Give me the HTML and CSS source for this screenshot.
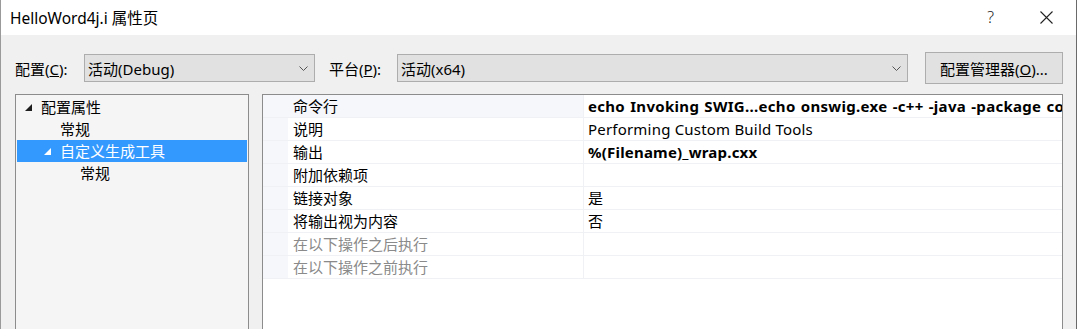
FILE: index.html
```html
<!DOCTYPE html>
<html lang="zh-CN">

<head>
	<meta charset="UTF-8">
	<title>HelloWord4j.i 属性页</title>
	<link rel="stylesheet" href="styles.css">
</head>

<body>
	<div class="window">
		<div class="titlebar">
			<span class="title">HelloWord4j.i 属性页</span>
			<span class="help">?</span>
			<svg class="close" width="13" height="13" viewBox="0 0 13 13">
				<path d="M0.5 0.5 L12.5 12.5 M12.5 0.5 L0.5 12.5" stroke="#222" stroke-width="1.1" fill="none" />
			</svg>
		</div>

		<div class="content">
			<div class="toolbar">
				<label class="lbl lbl-config">配置(<u>C</u>):</label>
				<div class="combo combo-config">
					<span>活动(Debug)</span>
					<svg width="9" height="5" viewBox="0 0 9 5"><path d="M0.5 0.5 L4.5 4.5 L8.5 0.5" stroke="#555" fill="none" /></svg>
				</div>
				<label class="lbl lbl-platform">平台(<u>P</u>):</label>
				<div class="combo combo-platform">
					<span>活动(x64)</span>
					<svg width="9" height="5" viewBox="0 0 9 5"><path d="M0.5 0.5 L4.5 4.5 L8.5 0.5" stroke="#555" fill="none" /></svg>
				</div>
				<button class="btn">配置管理器(<u>O</u>)...</button>
			</div>

			<div class="panels">
				<!-- 左侧树 -->
				<div class="tree">
					<div class="tree-item level0">
						<svg class="arrow" width="7" height="7" viewBox="0 0 7 7"><polygon points="7,0 7,7 0,7" fill="#1e1e1e" /></svg>
						<span>配置属性</span>
					</div>
					<div class="tree-item level1 leaf"><span>常规</span></div>
					<div class="tree-item level1 selected">
						<svg class="arrow" width="7" height="7" viewBox="0 0 7 7"><polygon points="7,0 7,7 0,7" fill="#fff" /></svg>
						<span>自定义生成工具</span>
					</div>
					<div class="tree-item level2 leaf"><span>常规</span></div>
				</div>

				<!-- 右侧属性表 -->
				<div class="grid">
					<div class="row current">
						<div class="gutter"></div>
						<div class="name">命令行</div>
						<div class="value bold cmd">echo Invoking SWIG...echo onswig.exe -c++ -java -package com</div>
					</div>
					<div class="row">
						<div class="gutter"></div>
						<div class="name">说明</div>
						<div class="value">Performing Custom Build Tools</div>
					</div>
					<div class="row">
						<div class="gutter"></div>
						<div class="name">输出</div>
						<div class="value bold">%(Filename)_wrap.cxx</div>
					</div>
					<div class="row">
						<div class="gutter"></div>
						<div class="name">附加依赖项</div>
						<div class="value"></div>
					</div>
					<div class="row">
						<div class="gutter"></div>
						<div class="name">链接对象</div>
						<div class="value">是</div>
					</div>
					<div class="row">
						<div class="gutter"></div>
						<div class="name">将输出视为内容</div>
						<div class="value">否</div>
					</div>
					<div class="row disabled">
						<div class="gutter"></div>
						<div class="name">在以下操作之后执行</div>
						<div class="value"></div>
					</div>
					<div class="row disabled">
						<div class="gutter"></div>
						<div class="name">在以下操作之前执行</div>
						<div class="value"></div>
					</div>
				</div>
			</div>
		</div>
	</div>
</body>

</html>
```

FILE: styles.css
```css
* {
	box-sizing: border-box;
}

body {
	margin: 0;
	width: 1077px;
	height: 329px;
	overflow: hidden;
	font-family: "Noto Sans", "Noto Sans CJK SC", sans-serif;
	font-size: 15px;
	color: #000;
}

.window {
	height: 329px;
	border-left: 1px solid #9a9a9a;
	border-right: 1px solid #6a6a6a;
	background: #f0f0f0;
	display: flex;
	flex-direction: column;
}

.titlebar {
	height: 35px;
	flex: none;
	background: #fff;
	display: flex;
	align-items: center;
	padding-left: 9px;
	padding-bottom: 1px;
}

.title {
	font-size: 15.5px;
	flex: 1;
}

.help {
	font-size: 16px;
	font-weight: 300;
	color: #222;
	margin-right: 46px;
}

.close {
	margin-right: 23px;
}

.content {
	padding: 17px 13px 0 14px;
	flex: 1;
	display: flex;
	flex-direction: column;
}

.toolbar {
	height: 32px;
	display: flex;
	align-items: center;
}

.lbl {
	flex: none;
}

.lbl-config {
	width: 69px;
}

.lbl-platform {
	width: 68px;
	margin-left: 14px;
}

.combo {
	height: 28px;
	background: #e1e1e1;
	border: 1px solid #adadad;
	display: flex;
	align-items: center;
	justify-content: space-between;
	padding: 0 6px 0 3px;
	flex: none;
}

.combo-config {
	width: 231px;
}

.combo-platform {
	width: 511px;
}

.btn {
	width: 139px;
	height: 32px;
	margin-left: 17px;
	background: #e1e1e1;
	border: 1px solid #adadad;
	font: inherit;
	color: #000;
	padding: 0;
}

.panels {
	margin-top: 10px;
	display: flex;
	gap: 13px;
	flex: 1;
}

.tree {
	width: 234px;
	border: 1px solid #8c8c8c;
	border-bottom: none;
	background: #f5f5f5;
	padding: 1px;
}

.tree-item {
	height: 22px;
	display: flex;
	align-items: center;
	line-height: 22px;
}

.tree-item .arrow {
	margin-right: 9px;
	flex: none;
}

.level0 {
	padding-left: 8px;
}

.level1 {
	padding-left: 27px;
}

.level2 {
	padding-left: 47px;
}

.leaf {
	padding-left: 43px;
}

.level2.leaf {
	padding-left: 63px;
}

.selected {
	background: #3399ff;
	color: #fff;
}

.grid {
	flex: 1;
	border: 1px solid #8c8c8c;
	border-bottom: none;
	background: #fff;
	overflow: hidden;
}

.row {
	height: 23px;
	display: flex;
	border-bottom: 1px solid #eff1f5;
}

.gutter {
	width: 25px;
	flex: none;
	background: #f5f7fb;
}

.name {
	width: 296px;
	flex: none;
	padding-left: 5px;
	line-height: 22px;
	white-space: nowrap;
	border-right: 1px solid #eff1f5;
}

.current .name {
	background: #f5f7fb;
}

.value {
	flex: 1;
	padding-left: 4px;
	line-height: 22px;
	white-space: nowrap;
	overflow: hidden;
	letter-spacing: 0.2px;
}

.bold {
	font-weight: bold;
}

.cmd {
	letter-spacing: 0.3px;
	word-spacing: 1px;
}

.disabled .name {
	color: #8a8a8a;
}
```
